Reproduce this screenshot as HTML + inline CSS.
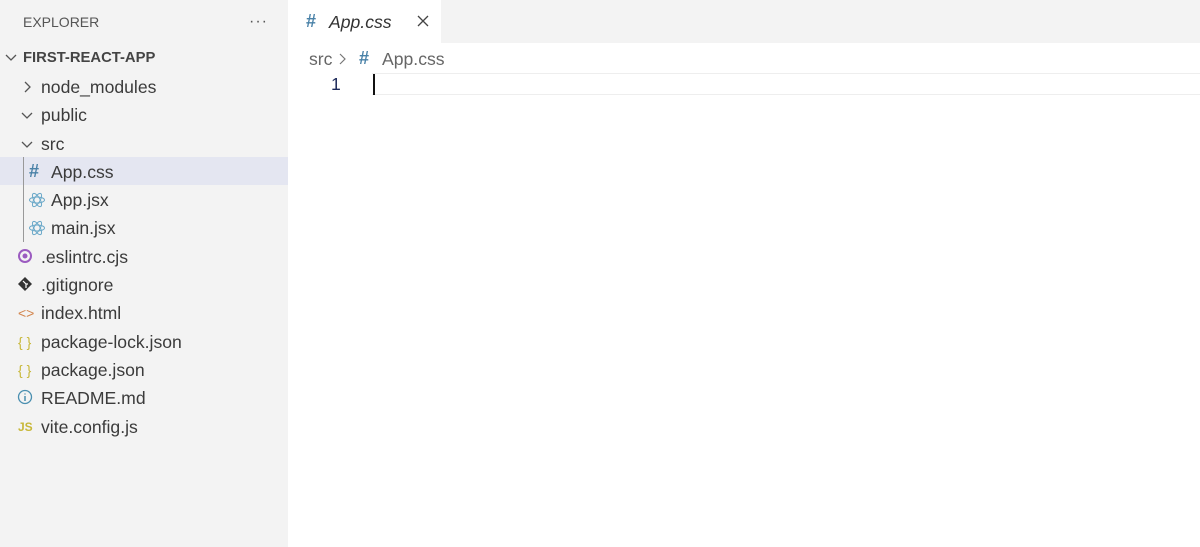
<!DOCTYPE html>
<html><head><style>
*{margin:0;padding:0;box-sizing:border-box}
body{width:1200px;height:547px;background:#fff;font-family:"Liberation Sans",sans-serif;position:relative;overflow:hidden;color:#3b3b3b}
#side{position:absolute;left:0;top:0;width:288px;height:547px;background:#f3f3f3}
.t{position:absolute;font-size:17.6px;white-space:nowrap;line-height:20px}
.row{position:absolute;left:0;width:288px;height:28px}
.ic{position:absolute;font-size:15px;line-height:20px}
</style></head><body>
<div id="side">
<div class="t" style="left:23px;top:12px;font-size:14px;color:#555">EXPLORER</div>
<div class="t" style="left:249px;top:12px;font-size:16px;color:#555;letter-spacing:1px">···</div>
<div class="row" style="top:157px;background:#e4e6f1"></div>
<svg style="position:absolute;left:4px;top:52px" width="14" height="12"><path d="M2 3l5 5 5-5" stroke="#555" fill="none" stroke-width="1.3"/></svg>
<div class="t" style="left:23px;top:48px;font-size:14.8px;font-weight:bold;color:#444">FIRST-REACT-APP</div>
<svg style="position:absolute;left:22px;top:80px" width="12" height="14"><path d="M3 2l5 5-5 5" stroke="#555" fill="none" stroke-width="1.3"/></svg>
<div class="t" style="left:41px;top:77px">node_modules</div>
<svg style="position:absolute;left:20px;top:110px" width="14" height="12"><path d="M2 3l5 5 5-5" stroke="#555" fill="none" stroke-width="1.3"/></svg>
<div class="t" style="left:41px;top:105px">public</div>
<svg style="position:absolute;left:20px;top:139px" width="14" height="12"><path d="M2 3l5 5 5-5" stroke="#555" fill="none" stroke-width="1.3"/></svg>
<div class="t" style="left:41px;top:134px">src</div>
<div style="position:absolute;left:23px;top:157px;width:1px;height:85px;background:#999"></div>
<div class="ic" style="left:29px;top:161px;color:#4a82a8;font-weight:bold;font-size:18px">#</div>
<div class="t" style="left:51px;top:162px">App.css</div>
<svg style="position:absolute;left:28px;top:191px" width="18" height="18" viewBox="0 0 18 18" fill="none" stroke="#6aa8c8" stroke-width="1"><ellipse cx="9" cy="9" rx="7.5" ry="3"/><ellipse cx="9" cy="9" rx="7.5" ry="3" transform="rotate(60 9 9)"/><ellipse cx="9" cy="9" rx="7.5" ry="3" transform="rotate(120 9 9)"/></svg>
<div class="t" style="left:51px;top:190px">App.jsx</div>
<svg style="position:absolute;left:28px;top:219px" width="18" height="18" viewBox="0 0 18 18" fill="none" stroke="#6aa8c8" stroke-width="1"><ellipse cx="9" cy="9" rx="7.5" ry="3"/><ellipse cx="9" cy="9" rx="7.5" ry="3" transform="rotate(60 9 9)"/><ellipse cx="9" cy="9" rx="7.5" ry="3" transform="rotate(120 9 9)"/></svg>
<div class="t" style="left:51px;top:218px">main.jsx</div>
<svg style="position:absolute;left:17px;top:248px" width="16" height="16"><circle cx="8" cy="8" r="6" fill="none" stroke="#9b5bc0" stroke-width="2"/><circle cx="8" cy="8" r="2.5" fill="#9b5bc0"/></svg>
<div class="t" style="left:41px;top:247px">.eslintrc.cjs</div>
<svg style="position:absolute;left:17px;top:276px" width="16" height="16"><path d="M8 1l7 7-7 7-7-7z" fill="#333"/><path d="M6 5l3 3v4M9 8l2 0" stroke="#fff" stroke-width="1.2" fill="none"/></svg>
<div class="t" style="left:41px;top:275px">.gitignore</div>
<div class="ic" style="left:18px;top:303px;color:#d2844c;font-size:14px">&lt;&gt;</div>
<div class="t" style="left:41px;top:303px">index.html</div>
<div class="ic" style="left:18px;top:332px;color:#c8b83a;font-size:14px">{ }</div>
<div class="t" style="left:41px;top:332px">package-lock.json</div>
<div class="ic" style="left:18px;top:360px;color:#c8b83a;font-size:14px">{ }</div>
<div class="t" style="left:41px;top:360px">package.json</div>
<svg style="position:absolute;left:17px;top:389px" width="16" height="16"><circle cx="8" cy="8" r="6.5" fill="none" stroke="#4a8fb0" stroke-width="1.3"/><path d="M8 7v5M8 4.5v1" stroke="#4a8fb0" stroke-width="1.5"/></svg>
<div class="t" style="left:41px;top:388px">README.md</div>
<div class="ic" style="left:18px;top:417px;color:#c8b83a;font-size:12px;font-weight:bold">JS</div>
<div class="t" style="left:41px;top:417px">vite.config.js</div>
</div>
<div style="position:absolute;left:288px;top:0;width:912px;height:43px;background:#f3f3f3"></div>
<div style="position:absolute;left:288px;top:0;width:153px;height:43px;background:#fff"></div>
<div class="ic" style="left:306px;top:11px;color:#4a82a8;font-weight:bold;font-size:18px">#</div>
<div class="t" style="left:329px;top:12px;font-style:italic;color:#333">App.css</div>
<svg style="position:absolute;left:417px;top:15px" width="12" height="12"><path d="M1 1l10 10M11 1L1 11" stroke="#444" stroke-width="1.3"/></svg>
<div class="t" style="left:309px;top:49px;color:#666">src</div>
<svg style="position:absolute;left:338px;top:52px" width="10" height="14"><path d="M2 2l5 5-5 5" stroke="#777" fill="none" stroke-width="1.2"/></svg>
<div class="ic" style="left:359px;top:48px;color:#4a82a8;font-weight:bold;font-size:18px">#</div>
<div class="t" style="left:382px;top:49px;color:#666">App.css</div>
<div style="position:absolute;left:372px;top:73px;width:828px;height:22px;border-top:1px solid #eee;border-bottom:1px solid #eee"></div>
<div class="t" style="left:331px;top:74px;color:#1d2a5a">1</div>
<div style="position:absolute;left:373px;top:74px;width:2px;height:21px;background:#111"></div>
</body></html>
